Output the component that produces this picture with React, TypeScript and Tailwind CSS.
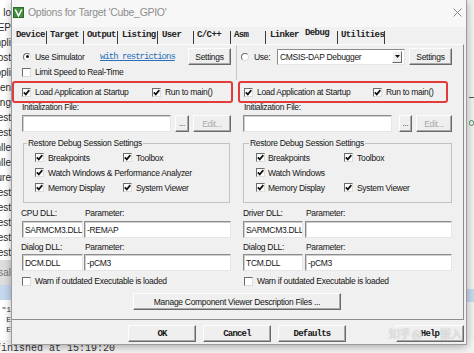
import React from "react";

const SANS = "font-['Liberation_Sans',Arial,sans-serif]";
const MONO = "font-['Liberation_Mono','Courier_New',monospace]";

type Kids = { children?: React.ReactNode; className?: string };

function Check({ on = true }: { on?: boolean }) {
  return (
    <span className="flex h-[9px] w-[9px] shrink-0 items-center justify-center border border-[#6c6c6c] border-b-[#dcdcdc] border-r-[#dcdcdc] bg-white">
      {on && (
        <svg width="7" height="7" viewBox="0 0 7 7">
          <path d="M0.8 3.3 L2.8 5.4 L6.3 1.1" fill="none" stroke="#111" strokeWidth="1.7" />
        </svg>
      )}
    </span>
  );
}

function Radio({ on = false }: { on?: boolean }) {
  return (
    <span className="flex h-[8px] w-[8px] shrink-0 items-center justify-center rounded-full border border-[#6c6c6c] border-b-[#dedede] border-r-[#dedede] bg-white">
      {on && <span className="h-[3px] w-[3px] rounded-full bg-[#111]" />}
    </span>
  );
}

function Btn({ children, className = "" }: Kids) {
  return (
    <div
      className={`flex shrink-0 items-center justify-center border border-[#fdfdfd] border-b-[#6a6a6a] border-r-[#6a6a6a] bg-[#efefef] shadow-[inset_-1px_-1px_0_#a9a9a9] ${className}`}
    >
      {children}
    </div>
  );
}

function Field({ children, className = "" }: Kids) {
  return (
    <div
      className={`flex h-[17px] shrink-0 items-center overflow-hidden border border-[#8c8c8c] border-b-[#e6e6e6] border-r-[#e6e6e6] bg-white pl-[2px] shadow-[inset_1px_1px_0_#cfcfcf] ${className}`}
    >
      {children}
    </div>
  );
}

function Tabs() {
  const sep = <div className="mt-[4px] h-[13px] w-px shrink-0 bg-[#3a3a3a]" />;
  const t = `mt-[2px] h-[13px] shrink-0 leading-[13px] text-[9px] font-bold tracking-[-0.6px] text-[#222] ${MONO}`;
  return (
    <div className="flex h-[17px] items-start pl-[4px]">
      <span className={`${t} w-[30px]`}>Device</span>
      {sep}
      <span className={`${t} w-[36px] pl-[3px]`}>Target</span>
      {sep}
      <span className={`${t} w-[33px] pl-[3px]`}>Output</span>
      {sep}
      <span className={`${t} w-[39px] pl-[4px]`}>Listing</span>
      {sep}
      <span className={`${t} w-[35px] pl-[4px]`}>User</span>
      {sep}
      <span className={`${t} w-[36px] pl-[3px]`}>C/C++</span>
      {sep}
      <span className={`${t} w-[34px] pl-[3px]`}>Asm</span>
      {sep}
      <span className={`${t} w-[35px] pl-[4px]`}>Linker</span>
      <span className={`h-[13px] w-[36px] shrink-0 pl-[4px] leading-[13px] text-[9px] font-bold tracking-[-0.6px] text-[#222] ${MONO}`}>
        Debug
      </span>
      {sep}
      <span className={`${t} w-[46px] pl-[3px]`}>Utilities</span>
      {sep}
    </div>
  );
}

function LeftColumn() {
  return (
    <div className="flex w-[221px] shrink-0 flex-col">
      <div className="mt-[3px] flex h-[17px] items-center pl-[11px]">
        <Radio on />
        <span className="ml-[4px] w-[65px] shrink-0">Use Simulator</span>
        <span className={`w-[88px] shrink-0 text-[9px] tracking-[-1px] text-[#2a6fb8] underline ${MONO}`}>
          with restrictions
        </span>
        <Btn className="h-[17px] w-[43px]">Settings</Btn>
      </div>
      <div className="flex h-[14px] items-center pl-[10px]">
        <Check on={false} />
        <span className="ml-[4px]">Limit Speed to Real-Time</span>
      </div>
      <div className="mt-[2px] flex h-[22px] items-center rounded-[3px] border-2 border-[#e23b3b] pl-[8px]">
        <Check />
        <span className="ml-[4px] w-[117px] shrink-0">Load Application at Startup</span>
        <Check />
        <span className="ml-[4px]">Run to main()</span>
      </div>
      <div className="h-[12px] pl-[10px] leading-[9px]">Initialization File:</div>
      <div className="flex h-[17px] pl-[10px]">
        <Field className="w-[149px]" />
        <Btn className="ml-[4px] h-[17px] w-[14px] text-[8px]">...</Btn>
        <Btn className="ml-[4px] h-[17px] w-[38px] text-[#a9a9a9]">Edit...</Btn>
      </div>
      <fieldset className="ml-[11px] mt-[5px] w-[207px] border border-[#c2c2c2] pb-[7px]">
        <legend className="ml-[3px] px-[1px] leading-[12px]">Restore Debug Session Settings</legend>
        <div className="flex flex-col pt-[1px]">
          <div className="flex h-[15px] items-center pl-[11px]">
            <Check />
            <span className="ml-[4px] w-[75px] shrink-0">Breakpoints</span>
            <Check />
            <span className="ml-[4px]">Toolbox</span>
          </div>
          <div className="flex h-[15px] items-center pl-[11px]">
            <Check />
            <span className="ml-[4px]">Watch Windows &amp; Performance Analyzer</span>
          </div>
          <div className="flex h-[15px] items-center pl-[11px]">
            <Check />
            <span className="ml-[4px] w-[75px] shrink-0">Memory Display</span>
            <Check />
            <span className="ml-[4px]">System Viewer</span>
          </div>
        </div>
      </fieldset>
      <div className="mt-[4px] flex h-[12px] pl-[9px] leading-[12px]">
        <span className="w-[64px] shrink-0">CPU DLL:</span>
        <span>Parameter:</span>
      </div>
      <div className="mt-[2px] flex h-[17px] pl-[10px]">
        <Field className="w-[61px]">SARMCM3.DLL</Field>
        <Field className="ml-[1px] w-[147px]">-REMAP</Field>
      </div>
      <div className="mt-[3px] flex h-[12px] pl-[9px] leading-[12px]">
        <span className="w-[64px] shrink-0">Dialog DLL:</span>
        <span>Parameter:</span>
      </div>
      <div className="mt-[1px] flex h-[17px] pl-[10px]">
        <Field className="w-[61px]">DCM.DLL</Field>
        <Field className="ml-[1px] w-[147px]">-pCM3</Field>
      </div>
      <div className="mt-[4px] flex h-[12px] items-center pl-[10px]">
        <Check on={false} />
        <span className="ml-[4px]">Warn if outdated Executable is loaded</span>
      </div>
    </div>
  );
}

function RightColumn() {
  return (
    <div className="flex w-[215px] shrink-0 flex-col">
      <div className="mt-[3px] flex h-[17px] items-center pl-[3px]">
        <Radio />
        <span className="ml-[5px] w-[23px] shrink-0">Use:</span>
        <div className="flex h-[16px] w-[128px] shrink-0 items-center border border-[#8c8c8c] border-b-[#e6e6e6] border-r-[#e6e6e6] bg-white pl-[2px]">
          <span>CMSIS-DAP Debugger</span>
          <div className="ml-auto mr-[2px] flex h-[12px] w-[10px] items-center justify-center border border-[#fdfdfd] border-b-[#6a6a6a] border-r-[#6a6a6a] bg-[#efefef]">
            <svg width="5" height="3" viewBox="0 0 5 3">
              <path d="M0 0 H5 L2.5 3 Z" fill="#111" />
            </svg>
          </div>
        </div>
        <Btn className="ml-[4px] h-[17px] w-[43px]">Settings</Btn>
      </div>
      <div className="h-[14px]" />
      <div className="mt-[2px] flex h-[22px] w-[210px] items-center rounded-[3px] border-2 border-[#e23b3b] pl-[4px]">
        <Check />
        <span className="ml-[4px] w-[116px] shrink-0">Load Application at Startup</span>
        <Check />
        <span className="ml-[4px]">Run to main()</span>
      </div>
      <div className="h-[12px] pl-[6px] leading-[9px]">Initialization File:</div>
      <div className="flex h-[17px] pl-[5px]">
        <Field className="w-[149px]" />
        <Btn className="ml-[7px] h-[17px] w-[13px] text-[8px]">...</Btn>
        <Btn className="ml-[4px] h-[17px] w-[36px] text-[#a9a9a9]">Edit...</Btn>
      </div>
      <fieldset className="ml-[5px] mt-[5px] w-[209px] border border-[#c2c2c2] pb-[7px]">
        <legend className="ml-[5px] px-[1px] leading-[12px]">Restore Debug Session Settings</legend>
        <div className="flex flex-col pt-[1px]">
          <div className="flex h-[15px] items-center pl-[12px]">
            <Check />
            <span className="ml-[3px] w-[76px] shrink-0">Breakpoints</span>
            <Check />
            <span className="ml-[4px]">Toolbox</span>
          </div>
          <div className="flex h-[15px] items-center pl-[12px]">
            <Check />
            <span className="ml-[3px]">Watch Windows</span>
          </div>
          <div className="flex h-[15px] items-center pl-[12px]">
            <Check />
            <span className="ml-[3px] w-[76px] shrink-0">Memory Display</span>
            <Check />
            <span className="ml-[4px]">System Viewer</span>
          </div>
        </div>
      </fieldset>
      <div className="mt-[4px] flex h-[12px] pl-[5px] leading-[12px]">
        <span className="w-[63px] shrink-0">Driver DLL:</span>
        <span>Parameter:</span>
      </div>
      <div className="mt-[2px] flex h-[17px] pl-[5px]">
        <Field className="w-[60px]">SARMCM3.DLL</Field>
        <Field className="ml-[2px] w-[147px]" />
      </div>
      <div className="mt-[3px] flex h-[12px] pl-[5px] leading-[12px]">
        <span className="w-[63px] shrink-0">Dialog DLL:</span>
        <span>Parameter:</span>
      </div>
      <div className="mt-[1px] flex h-[17px] pl-[5px]">
        <Field className="w-[60px]">TCM.DLL</Field>
        <Field className="ml-[2px] w-[147px]">-pCM3</Field>
      </div>
      <div className="mt-[4px] flex h-[12px] items-center pl-[6px]">
        <Check on={false} />
        <span className="ml-[4px]">Warn if outdated Executable is loaded</span>
      </div>
    </div>
  );
}

function Backdrop() {
  const lines = ["lo", "EP", "Compli", "host", "appli", "ren", "ing", "test", "test", "hlle", "hlle", "ure", "test", "test", "test", "test", "test"];
  return (
    <div className="flex h-[353px] flex-col">
      <div className="flex h-[340px]">
        <div className="flex w-[11px] shrink-0 flex-col bg-white">
          <div className="flex flex-col pt-[5px]">
            {lines.map((l, i) => (
              <div key={i} className="flex h-[15px] items-center justify-end overflow-hidden text-[10px] tracking-normal text-[#2b2b2b]">
                {l}
              </div>
            ))}
          </div>
          <div className="flex h-[25px] items-center justify-end overflow-hidden bg-[#dedede] text-[10px] tracking-normal text-[#777]">
            sal
          </div>
          <div className="h-[15px] bg-[#c4d8ee]" />
          <div className={`flex flex-col pt-[5px] text-[8px] tracking-normal text-[#333] ${MONO}`}>
            <div className="flex h-[10px] items-center justify-end overflow-hidden">"1</div>
            <div className="flex h-[10px] items-center justify-end overflow-hidden">E</div>
            <div className="flex h-[10px] items-center justify-end overflow-hidden">E</div>
          </div>
        </div>
        <div className="flex-1" />
        <div className="flex w-[7px] shrink-0 flex-col bg-[#f1f1f1]">
          <div className="mt-[97px] ml-[2px] h-px w-[5px] bg-[#555]" />
          <div className="mt-[22px] ml-[2px] h-[6px] w-[5px] rounded-full border border-[#4f8a55]" />
          <div className="mt-[163px] h-[13px] bg-[#c7d9ee]" />
        </div>
      </div>
      <div className={`-ml-[5px] h-[13px] pt-[2px] text-[10px] leading-[13px] tracking-normal text-[#333] ${MONO}`}>finished at 15:19:20</div>
    </div>
  );
}

export default function App() {
  return (
    <div className={`relative h-[353px] w-[474px] overflow-hidden whitespace-nowrap bg-[#f4f4f4] text-[8.5px] leading-[12px] tracking-[-0.3px] text-[#151515] ${SANS}`}>
      <Backdrop />
      <div className="absolute left-[11px] top-0 flex h-[345px] w-[456px] flex-col border-x border-b border-[#9c9c9c] bg-[#f0f0f0] shadow-[0_2px_8px_rgba(0,0,0,0.3)]">
        {/* title bar */}
        <div className="flex h-[27px] items-start bg-[#f7f7f7] pl-[1px] pt-[7px]">
          <svg width="11" height="11" viewBox="0 0 11 11" className="shrink-0">
            <rect x="0" y="0" width="11" height="11" fill="#3f8f3f" />
            <rect x="0.5" y="0.5" width="10" height="10" fill="none" stroke="#2c6b2c" />
            <path d="M2.2 2.5 L5.5 8.8 L8.8 2.5" fill="none" stroke="#fff" strokeWidth="1.6" />
          </svg>
          <span className="ml-[4px] text-[10.5px] leading-[11px] tracking-[-0.3px] text-[#8e8e8e]">Options for Target 'Cube_GPIO'</span>
          <svg width="9" height="9" viewBox="0 0 9 9" className="ml-auto mr-[4px] mt-[1px]">
            <path d="M0.5 0.5 L8.5 8.5 M8.5 0.5 L0.5 8.5" stroke="#8a8a8a" strokeWidth="1" />
          </svg>
        </div>
        <Tabs />
        {/* tab page */}
        <div className="flex h-[276px] w-[452px] flex-col border-t border-r border-b border-t-[#fbfbfb] border-r-[#8c8c8c] border-b-[#8c8c8c]">
          <div className="flex">
            <LeftColumn />
            <div className="flex w-[5px] shrink-0 flex-col pl-[3px]">
              <div className="h-[35px] w-px bg-[#c9c9c9]" />
            </div>
            <RightColumn />
          </div>
          <Btn className="ml-[121px] mt-[6px] h-[17px] w-[208px]">Manage Component Viewer Description Files ...</Btn>
        </div>
        {/* buttons */}
        <div className={`flex h-[24px] items-start pl-[116px] pt-[5px] text-[9px] font-bold tracking-[-0.8px] ${MONO}`}>
          <Btn className="h-[17px] w-[68px]">OK</Btn>
          <Btn className="ml-[7px] h-[17px] w-[68px]">Cancel</Btn>
          <Btn className="ml-[7px] h-[17px] w-[68px]">Defaults</Btn>
          <Btn className="ml-[50px] h-[17px] w-[68px]">Help</Btn>
        </div>
        <div className="absolute left-[377px] top-[326px] font-['Noto_Sans_CJK_SC',sans-serif] text-[11px] leading-[15px] tracking-[-0.5px] text-white/80 [text-shadow:0_0_1px_#888]">
          知乎 @
        </div>
        <div className="absolute left-[428px] top-[326px] font-['Noto_Sans_CJK_SC',sans-serif] text-[11px] leading-[15px] tracking-normal text-white/80 [text-shadow:0_0_1px_#888]">
          嵌入
        </div>
      </div>
    </div>
  );
}
